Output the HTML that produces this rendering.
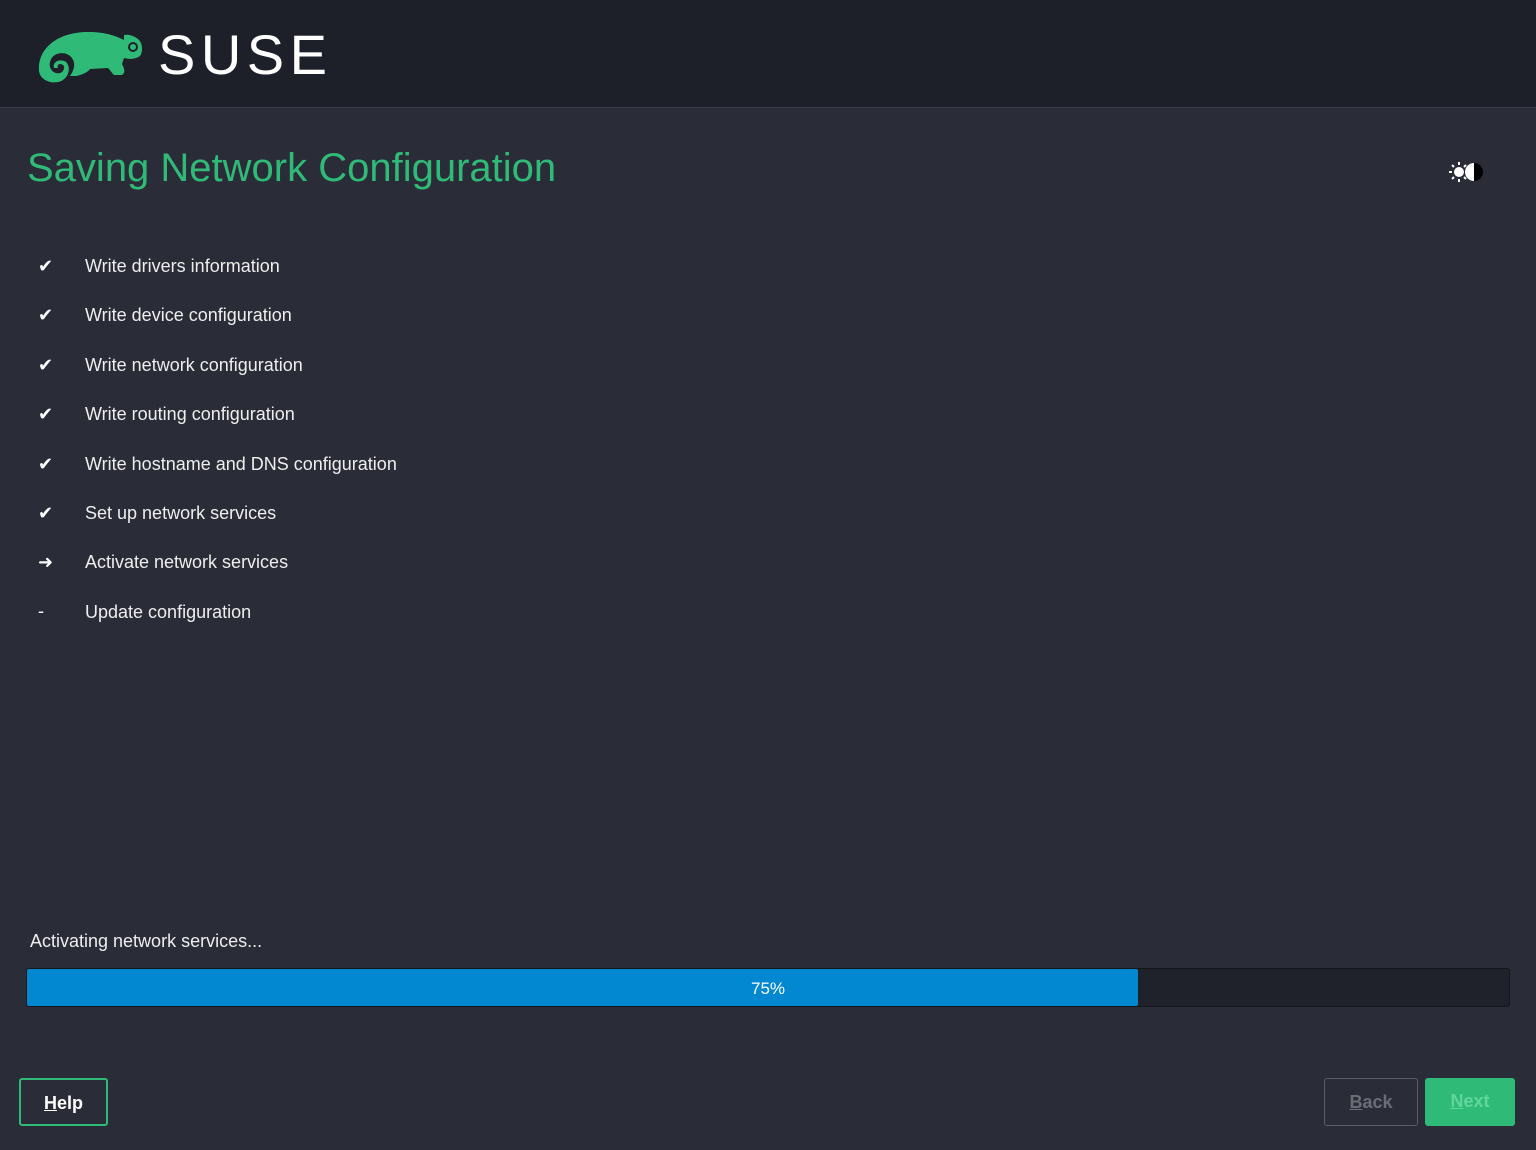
<!DOCTYPE html>
<html><head><style>
body{margin:0;width:1536px;height:1150px;background:#2a2d37;font-family:"Liberation Sans",sans-serif;position:relative;overflow:hidden;color:#eee}
.hdr{position:absolute;left:0;top:0;width:1536px;height:107px;background:#1e2029;border-bottom:1px solid #3a3d47}
.suse{position:absolute;left:158px;top:22px;font-size:56px;color:#fff;letter-spacing:5.5px;font-weight:normal}
h1{position:absolute;left:27px;top:146px;margin:0;font-weight:normal;font-size:40px;letter-spacing:0px;color:#30ba78}
.item{position:absolute;left:85px;font-size:18px;color:#eee}
.ic{position:absolute;left:38px;font-size:18px;color:#fff}
.status{position:absolute;left:30px;top:931px;font-size:18px}
.bar{position:absolute;left:26px;top:968px;width:1482px;height:37px;background:#20222b;border:1px solid #15161c;border-radius:3px}
.fill{position:absolute;left:0;top:0;width:1111px;height:37px;background:#0288d1;border-radius:2px}
.pct{position:absolute;left:0;width:1482px;top:10px;text-align:center;font-size:17px;color:#fff}
.btn{position:absolute;top:1078px;height:48px;border-radius:3px;box-sizing:border-box;font-size:18px;font-weight:bold;text-align:center;line-height:46px}
</style></head><body>
<div class="hdr">
<svg style="position:absolute;left:36px;top:30px" width="108" height="56" viewBox="0 0 108 56">
<path fill="#30ba78" d="M3 40 C2 18 22 2 52 2 C70 2 80 6 88 10 L88 5 C93 4 98 6 102 9 C107 13 107 22 104 26 C98 30 92 29 88 28 L86 34 C88 38 90 42 86 45 L78 45 C76 43 74 40 72 38 L54 39 C52 42 46 45 40 46 L34 46 C38 40 40 34 36 28 C30 20 16 22 14 32 C12 40 20 46 26 42 C30 38 28 34 24 34 C22 34 21 36 22 38 L18 38 C16 32 24 28 30 32 C36 38 32 50 22 52 C12 54 3 48 3 40Z"/>
<circle cx="97" cy="17" r="5" fill="#1e2029"/><circle cx="97" cy="17" r="3" fill="#30ba78"/>
</svg>
<div class="suse">SUSE</div>
</div>
<h1>Saving Network Configuration</h1>
<svg style="position:absolute;left:1448px;top:161px" width="38" height="22" viewBox="0 0 38 22">
<circle cx="11" cy="11" r="5" fill="#fff"/>
<g stroke="#fff" stroke-width="2"><path d="M11 1v3M11 18v3M1 11h3M18 11h3M4 4l2 2M16 16l2 2M4 18l2-2M16 6l2-2"/></g>
<circle cx="26" cy="11" r="9" fill="#000"/><path d="M26 2a9 9 0 0 0 0 18z" fill="#fff"/>
</svg>
<div class="ic" style="top:256px">✔</div><div class="item" style="top:256px">Write drivers information</div>
<div class="ic" style="top:305px">✔</div><div class="item" style="top:305px">Write device configuration</div>
<div class="ic" style="top:355px">✔</div><div class="item" style="top:355px">Write network configuration</div>
<div class="ic" style="top:404px">✔</div><div class="item" style="top:404px">Write routing configuration</div>
<div class="ic" style="top:454px">✔</div><div class="item" style="top:454px">Write hostname and DNS configuration</div>
<div class="ic" style="top:503px">✔</div><div class="item" style="top:503px">Set up network services</div>
<div class="ic" style="top:552px">➜</div><div class="item" style="top:552px">Activate network services</div>
<div class="ic" style="top:601px">-</div><div class="item" style="top:602px">Update configuration</div>
<div class="status">Activating network services...</div>
<div class="bar"><div class="fill"></div><div class="pct">75%</div></div>
<div class="btn" style="left:19px;width:89px;border:2px solid #30ba78;color:#fff"><u>H</u>elp</div>
<div class="btn" style="left:1324px;width:94px;border:1px solid #5a5d66;color:#6a6d76"><u>B</u>ack</div>
<div class="btn" style="left:1425px;width:90px;background:#30ba78;color:#5fd69c"><u>N</u>ext</div>
</body></html>
